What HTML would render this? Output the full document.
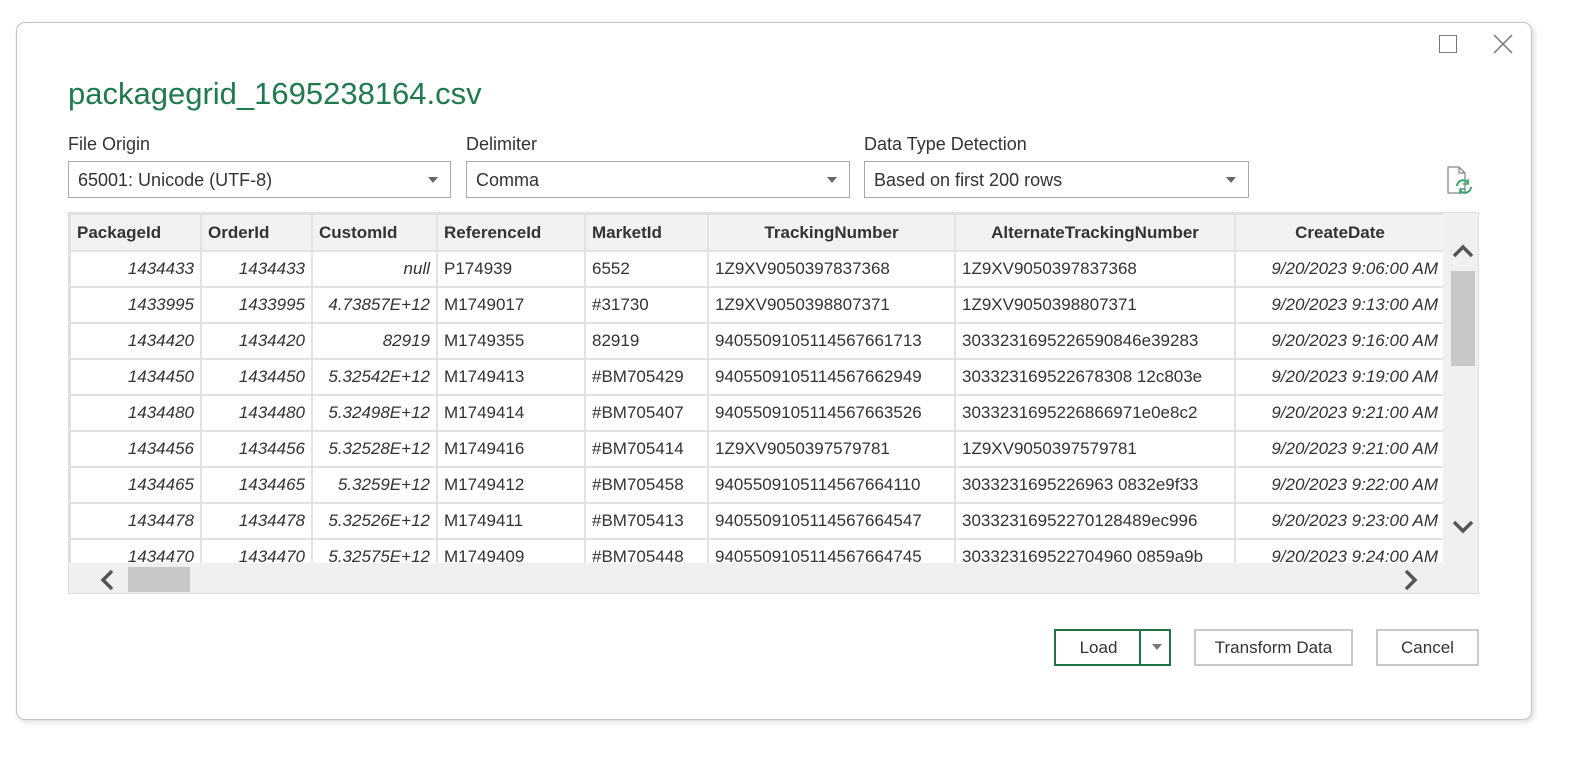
<!DOCTYPE html>
<html><head><style>
*{box-sizing:border-box;margin:0;padding:0}
body{width:1588px;height:762px;background:#fff;font-family:"Liberation Sans",sans-serif;color:#333;position:relative;overflow:hidden}
.dlg{position:absolute;left:16px;top:22px;width:1516px;height:698px;border:1px solid #c4c4c4;border-radius:9px;box-shadow:2px 2px 6px rgba(0,0,0,.15);background:#fff}
.a{position:absolute}
.title{left:68px;top:76px;font-size:31px;color:#1f7a4d;font-weight:300}
.lbl{font-size:18px;color:#333;top:134px}
.dd{top:161px;height:37px;border:1px solid #a8a8a8;font-size:18px;padding:8px 9px;color:#333}
.dd:after{content:"";position:absolute;right:12px;top:15px;border-left:5px solid transparent;border-right:5px solid transparent;border-top:6px solid #666}
.grid{left:68px;top:212px;width:1411px;height:382px;border:1px solid #ddd;background:#f0f0f0;overflow:hidden}
table{border-collapse:collapse;position:absolute;left:0;top:0;font-size:17px;background:#fff}
td,th{border:2px solid #e2e2e2;height:36px;padding:0 6px;white-space:nowrap;color:#333}
th{background:#f2f2f2;font-weight:bold;text-align:left;height:37px}
th.c{text-align:center}
td.n{text-align:right;font-style:italic}
td.i{font-style:italic}
.btn{top:629px;height:37px;border:2px solid #c8c8c8;font-size:17px;text-align:center;line-height:33px;color:#333}
</style></head><body>
<div class="dlg"></div>
<div class="a" style="left:1439px;top:35px;width:18px;height:18px;border:1.5px solid #777"></div>
<svg class="a" style="left:1492px;top:33px" width="22" height="22"><path d="M2 2L20 20M20 2L2 20" stroke="#777" stroke-width="1.5"/></svg>
<div class="a title">packagegrid_1695238164.csv</div>
<div class="a lbl" style="left:68px">File Origin</div>
<div class="a lbl" style="left:466px">Delimiter</div>
<div class="a lbl" style="left:864px">Data Type Detection</div>
<div class="a dd" style="left:68px;width:383px">65001: Unicode (UTF-8)</div>
<div class="a dd" style="left:466px;width:384px">Comma</div>
<div class="a dd" style="left:864px;width:385px">Based on first 200 rows</div>
<svg class="a" style="left:1446px;top:166px" width="28" height="30"><path d="M2 1H13L19 7V27H2Z" fill="none" stroke="#888" stroke-width="1.3"/><path d="M13 1V7H19" fill="none" stroke="#888" stroke-width="1.3"/><path d="M11 20a6 6 0 0 1 11-3M25 21a6 6 0 0 1-11 3" fill="none" stroke="#3aa36a" stroke-width="2"/><path d="M22 13v5h-5M14 28v-5h5" fill="none" stroke="#3aa36a" stroke-width="1.6"/></svg>
<div class="a grid">
<table>
<colgroup><col style="width:131px"><col style="width:111px"><col style="width:125px"><col style="width:148px"><col style="width:123px"><col style="width:247px"><col style="width:280px"><col style="width:210px"></colgroup>
<tr><th>PackageId</th><th>OrderId</th><th>CustomId</th><th>ReferenceId</th><th>MarketId</th><th class="c">TrackingNumber</th><th class="c">AlternateTrackingNumber</th><th class="c">CreateDate</th></tr>
<tr><td class="n">1434433</td><td class="n">1434433</td><td class="n">null</td><td>P174939</td><td>6552</td><td>1Z9XV9050397837368</td><td>1Z9XV9050397837368</td><td class="n">9/20/2023 9:06:00 AM</td></tr>
<tr><td class="n">1433995</td><td class="n">1433995</td><td class="n">4.73857E+12</td><td>M1749017</td><td>#31730</td><td>1Z9XV9050398807371</td><td>1Z9XV9050398807371</td><td class="n">9/20/2023 9:13:00 AM</td></tr>
<tr><td class="n">1434420</td><td class="n">1434420</td><td class="n">82919</td><td>M1749355</td><td>82919</td><td>9405509105114567661713</td><td>3033231695226590846e39283</td><td class="n">9/20/2023 9:16:00 AM</td></tr>
<tr><td class="n">1434450</td><td class="n">1434450</td><td class="n">5.32542E+12</td><td>M1749413</td><td>#BM705429</td><td>9405509105114567662949</td><td>303323169522678308 12c803e</td><td class="n">9/20/2023 9:19:00 AM</td></tr>
<tr><td class="n">1434480</td><td class="n">1434480</td><td class="n">5.32498E+12</td><td>M1749414</td><td>#BM705407</td><td>9405509105114567663526</td><td>3033231695226866971e0e8c2</td><td class="n">9/20/2023 9:21:00 AM</td></tr>
<tr><td class="n">1434456</td><td class="n">1434456</td><td class="n">5.32528E+12</td><td>M1749416</td><td>#BM705414</td><td>1Z9XV9050397579781</td><td>1Z9XV9050397579781</td><td class="n">9/20/2023 9:21:00 AM</td></tr>
<tr><td class="n">1434465</td><td class="n">1434465</td><td class="n">5.3259E+12</td><td>M1749412</td><td>#BM705458</td><td>9405509105114567664110</td><td>3033231695226963 0832e9f33</td><td class="n">9/20/2023 9:22:00 AM</td></tr>
<tr><td class="n">1434478</td><td class="n">1434478</td><td class="n">5.32526E+12</td><td>M1749411</td><td>#BM705413</td><td>9405509105114567664547</td><td>30332316952270128489ec996</td><td class="n">9/20/2023 9:23:00 AM</td></tr>
<tr><td class="n">1434470</td><td class="n">1434470</td><td class="n">5.32575E+12</td><td>M1749409</td><td>#BM705448</td><td>9405509105114567664745</td><td>303323169522704960 0859a9b</td><td class="n">9/20/2023 9:24:00 AM</td></tr>
</table>
<div class="a" style="left:0;top:350px;width:1411px;height:32px;background:#f0f0f0"></div>
<div class="a" style="left:1374px;top:0;width:37px;height:382px;background:#f0f0f0"></div>
<div class="a" style="left:1382px;top:58px;width:24px;height:95px;background:#c8c8c8"></div>
<div class="a" style="left:59px;top:354px;width:62px;height:25px;background:#c8c8c8"></div>
<svg class="a" style="left:1382px;top:30px" width="24" height="16"><path d="M3 13L12 4L21 13" fill="none" stroke="#555" stroke-width="3.5"/></svg>
<svg class="a" style="left:1382px;top:306px" width="24" height="16"><path d="M3 3L12 12L21 3" fill="none" stroke="#555" stroke-width="3.5"/></svg>
<svg class="a" style="left:30px;top:356px" width="16" height="22"><path d="M13 2L4 11L13 20" fill="none" stroke="#555" stroke-width="3.5"/></svg>
<svg class="a" style="left:1334px;top:356px" width="16" height="22"><path d="M3 2L12 11L3 20" fill="none" stroke="#555" stroke-width="3.5"/></svg>
</div>
<div class="a btn" style="left:1054px;width:117px;border-color:#217346"><div class="a" style="left:0;top:0;width:85px">Load</div><div class="a" style="left:83px;top:-2px;width:2px;height:37px;background:#217346"></div><div class="a" style="left:96px;top:13px;border-left:5px solid transparent;border-right:5px solid transparent;border-top:6px solid #777"></div></div>
<div class="a btn" style="left:1194px;width:159px">Transform Data</div>
<div class="a btn" style="left:1376px;width:103px">Cancel</div>
</body></html>
